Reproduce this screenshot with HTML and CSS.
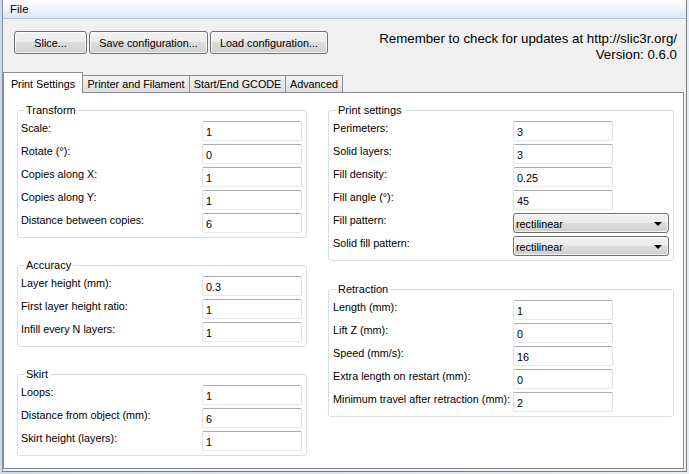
FILE: index.html
```html
<!DOCTYPE html>
<html>
<head>
<meta charset="utf-8">
<title>Slic3r</title>
<link rel="stylesheet" href="styles.css">
</head>
<body>
<div class="window">
  <div class="menubar"><span class="menu-item">File</span></div>
  <div class="toolbar">
    <div class="buttons">
      <button class="btn btn-slice">Slice...</button>
      <button class="btn btn-save">Save configuration...</button>
      <button class="btn btn-load">Load configuration...</button>
    </div>
    <div class="notice">
      <div>Remember to check for updates at http://slic3r.org/</div>
      <div>Version: 0.6.0</div>
    </div>
  </div>
  <div class="notebook">
    <div class="tabs">
      <div class="tab active t1">Print Settings</div>
      <div class="tab t2">Printer and Filament</div>
      <div class="tab t3">Start/End GCODE</div>
      <div class="tab t4">Advanced</div>
    </div>
    <div class="panel">
      <div class="column col-left">
        <fieldset class="group">
          <legend>Transform</legend>
          <div class="grid">
            <label>Scale:</label><div class="field">1</div>
            <label>Rotate (°):</label><div class="field">0</div>
            <label>Copies along X:</label><div class="field">1</div>
            <label>Copies along Y:</label><div class="field">1</div>
            <label>Distance between copies:</label><div class="field">6</div>
          </div>
        </fieldset>
        <fieldset class="group">
          <legend>Accuracy</legend>
          <div class="grid">
            <label>Layer height (mm):</label><div class="field">0.3</div>
            <label>First layer height ratio:</label><div class="field">1</div>
            <label>Infill every N layers:</label><div class="field">1</div>
          </div>
        </fieldset>
        <fieldset class="group">
          <legend>Skirt</legend>
          <div class="grid">
            <label>Loops:</label><div class="field">1</div>
            <label>Distance from object (mm):</label><div class="field">6</div>
            <label>Skirt height (layers):</label><div class="field">1</div>
          </div>
        </fieldset>
      </div>
      <div class="column col-right">
        <fieldset class="group">
          <legend>Print settings</legend>
          <div class="grid">
            <label>Perimeters:</label><div class="field">3</div>
            <label>Solid layers:</label><div class="field">3</div>
            <label>Fill density:</label><div class="field">0.25</div>
            <label>Fill angle (°):</label><div class="field">45</div>
            <label>Fill pattern:</label><div class="combo"><span>rectilinear</span><i class="arrow"></i></div>
            <label>Solid fill pattern:</label><div class="combo"><span>rectilinear</span><i class="arrow"></i></div>
          </div>
        </fieldset>
        <fieldset class="group">
          <legend>Retraction</legend>
          <div class="grid">
            <label>Length (mm):</label><div class="field">1</div>
            <label>Lift Z (mm):</label><div class="field">0</div>
            <label>Speed (mm/s):</label><div class="field">16</div>
            <label>Extra length on restart (mm):</label><div class="field">0</div>
            <label>Minimum travel after retraction (mm):</label><div class="field">2</div>
          </div>
        </fieldset>
      </div>
    </div>
  </div>
</div>
</body>
</html>
```
FILE: styles.css
```css
html, body {
  margin: 0;
  padding: 0;
}
body {
  width: 689px;
  height: 474px;
  overflow: hidden;
  background: linear-gradient(90deg, #c9dcef, #e4eef8);
  font-family: "Liberation Sans", Arial, sans-serif;
  font-size: 10.8px;
  color: #000;
}
.window {
  margin-left: 2px;
  width: 683px;
  height: 471px;
  background: #f0f0f0;
  border-left: 1px solid #8e8f8f;
  border-right: 1px solid #7d7e7f;
  border-bottom: 1px solid #7d7e7f;
  display: flex;
  flex-direction: column;
}
.menubar {
  height: 18px;
  border-bottom: 1px solid #b6c3d6;
  background: linear-gradient(#ffffff, #f3f6fb 40%, #dde6f2);
  display: flex;
  align-items: center;
  font-size: 11.5px;
}
.menu-item {
  padding-left: 7px;
}
.toolbar {
  height: 53px;
  display: flex;
  justify-content: space-between;
  align-items: flex-start;
  padding: 12px 9px 0 11px;
  box-sizing: border-box;
}
.buttons {
  display: flex;
  gap: 2px;
}
.btn {
  height: 23px;
  box-sizing: border-box;
  border: 1px solid #707070;
  border-radius: 3px;
  background: linear-gradient(#f2f2f2, #ebebeb 49%, #dddddd 50%, #cfcfcf);
  box-shadow: inset 0 0 0 1px rgba(255,255,255,0.75);
  font: inherit;
  color: #000;
  padding: 0;
  text-align: center;
}
.btn-slice { width: 73px; }
.btn-save { width: 119px; }
.btn-load { width: 118px; }
.notice {
  text-align: right;
  font-size: 13.3px;
  line-height: 16px;
  padding-top: 0;
}
.notebook {
  margin-left: 0;
  width: 681px;
  display: flex;
  flex-direction: column;
}
.tabs {
  display: flex;
  align-items: flex-end;
  height: 21px;
  margin-bottom: -1px;
  position: relative;
  z-index: 1;
}
.tab {
  box-sizing: border-box;
  height: 18px;
  border: 1px solid #898c95;
  background: linear-gradient(#f3f3f3, #e9e9e9 50%, #dedede);
  display: flex;
  align-items: center;
  justify-content: center;
  margin-left: -1px;
  white-space: nowrap;
}
.tab.active {
  height: 21px;
  background: #fff;
  border-bottom: none;
  margin-left: 0;
  padding-top: 1px;
}
.t1 { width: 80px; }
.t2 { width: 108px; }
.t3 { width: 97px; }
.t4 { width: 58px; }
.panel {
  height: 377px;
  box-sizing: border-box;
  border: 1px solid #898c95;
  background: #fff;
  display: flex;
  gap: 21px;
  padding: 11px 0 0 13px;
}
.column {
  display: flex;
  flex-direction: column;
}
.col-left { width: 290px; gap: 21px; }
.col-right { width: 346px; gap: 22px; }
.group {
  margin: 0;
  border: 1px solid #d5dfe5;
  border-radius: 3px;
  padding: 4px 4px 4px 3px;
  min-width: 0;
}
.col-right .group {
  padding-left: 4px;
}
.group legend {
  margin-left: 3px;
  padding: 0 2px;
  line-height: 13px;
  font-size: 11px;
}
.grid {
  display: grid;
  grid-template-columns: 181px 100px;
  grid-auto-rows: 20px;
  row-gap: 3px;
}
.col-right .grid {
  grid-template-columns: 180px 156px;
}
.grid label {
  line-height: 13px;
  white-space: nowrap;
  padding-top: 1px;
}
.field {
  width: 100px;
  height: 20px;
  box-sizing: border-box;
  border: 1px solid;
  border-color: #abadb3 #dbdfe6 #e3e9ef #e2e3ea;
  border-radius: 2px;
  background: #fff;
  padding: 2px 3px 0;
  display: flex;
  align-items: center;
}
.combo {
  height: 20px;
  box-sizing: border-box;
  border: 1px solid #707070;
  border-radius: 3px;
  background: linear-gradient(#f2f2f2, #ebebeb 49%, #dddddd 50%, #cfcfcf);
  box-shadow: inset 0 0 0 1px rgba(255,255,255,0.7);
  display: flex;
  align-items: center;
  justify-content: space-between;
  padding: 1px 3px 0 2px;
}
.arrow {
  width: 0;
  height: 0;
  border-left: 4px solid transparent;
  border-right: 4px solid transparent;
  border-top: 4px solid #000;
  margin-right: 3px;
}
```
